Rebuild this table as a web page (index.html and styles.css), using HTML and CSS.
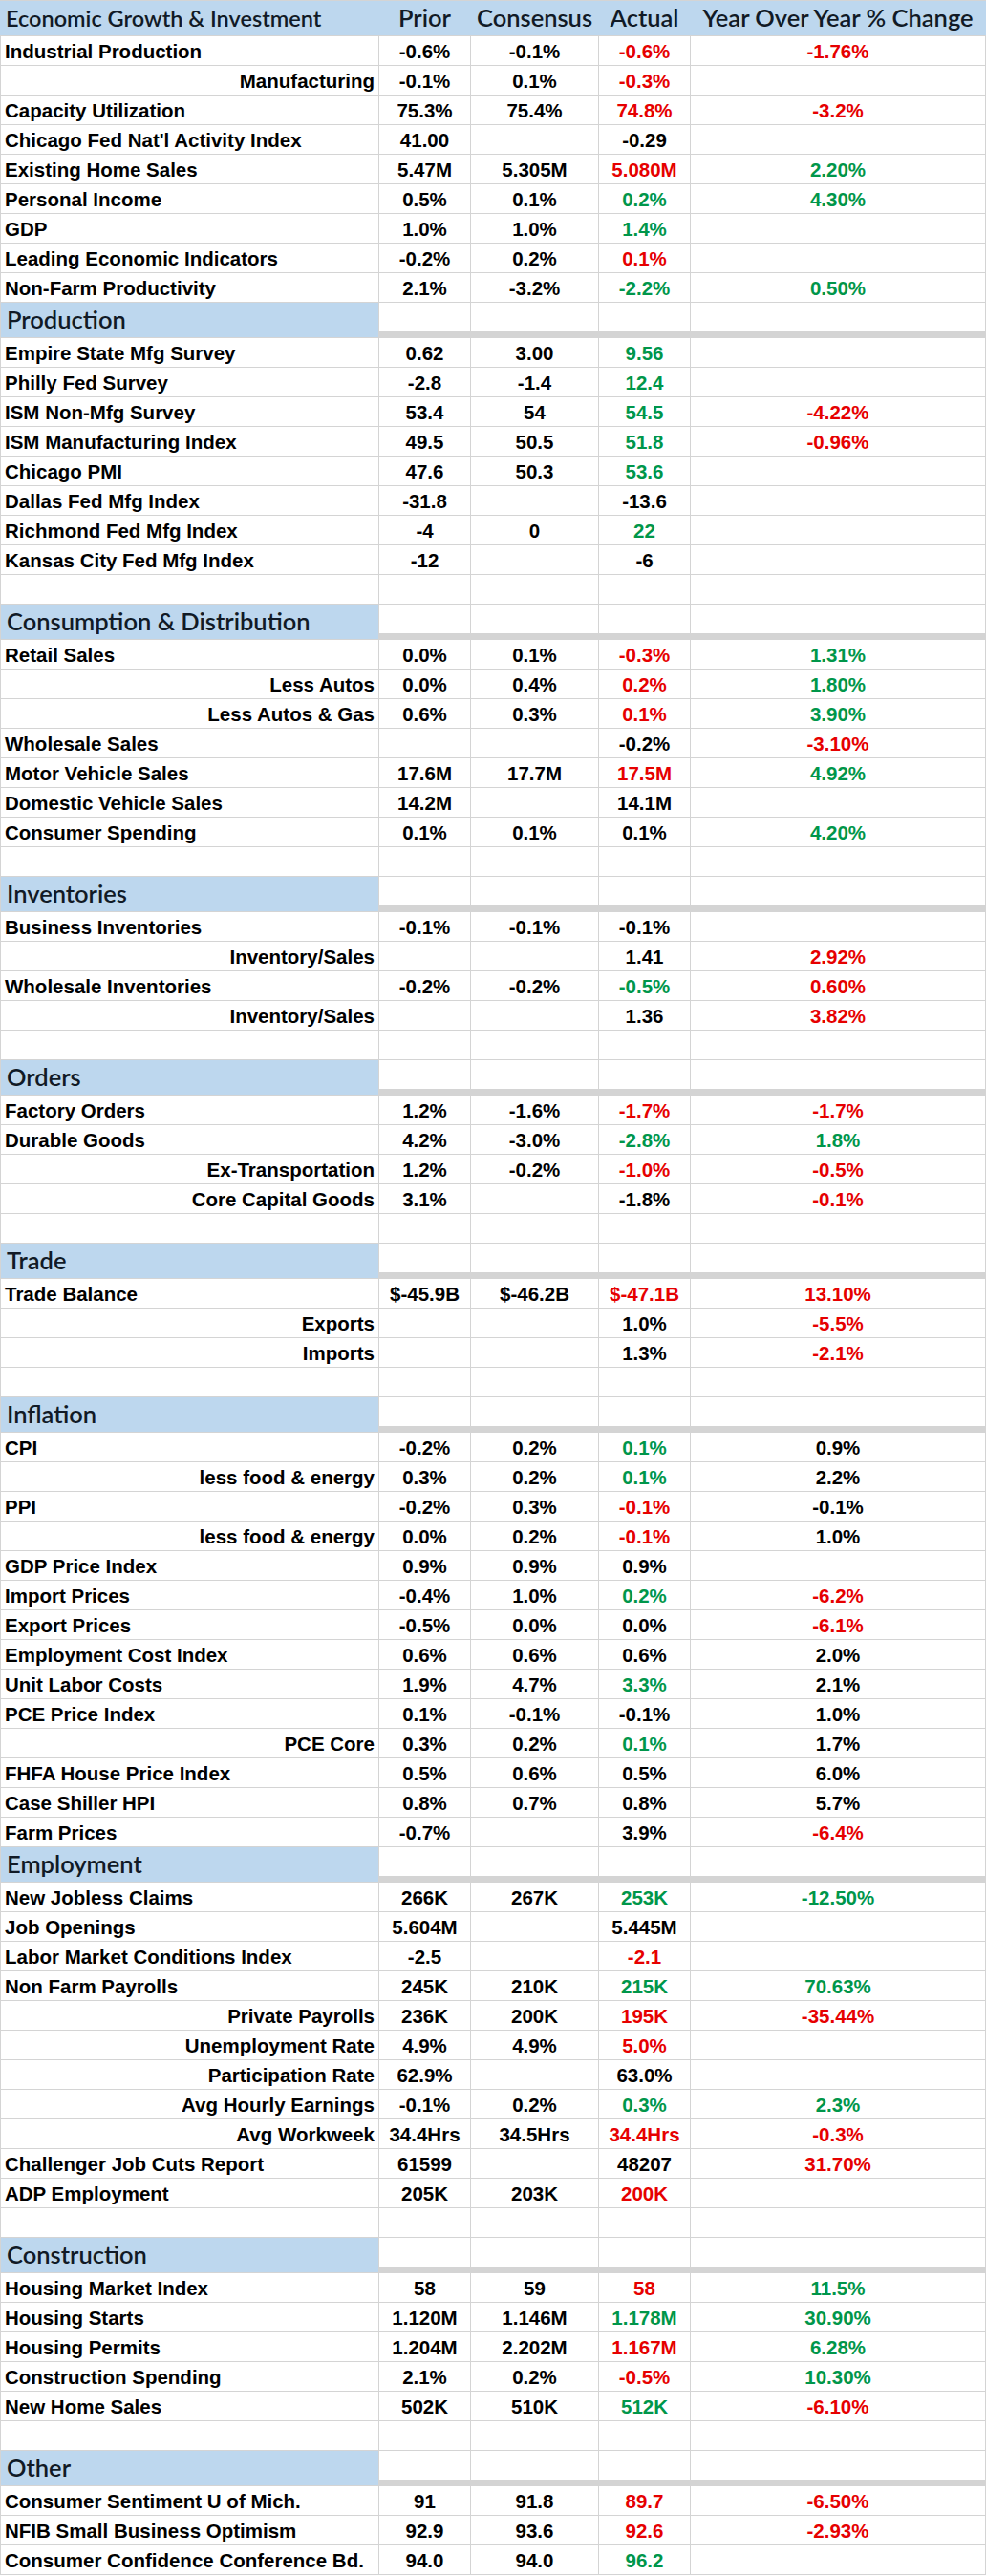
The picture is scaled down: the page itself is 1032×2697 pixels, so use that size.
FILE: index.html
```html
<!DOCTYPE html>
<html>
<head>
<meta charset="utf-8">
<link rel="stylesheet" href="styles.css">
</head>
<body>
<div class="sheet">
  <div class="top">
    <div class="th th-first">Economic Growth &amp; Investment</div>
    <div class="th">Prior</div>
    <div class="th">Consensus</div>
    <div class="th">Actual</div>
    <div class="th">Year Over Year % Change</div>
  </div>

  <div class="c l">Industrial Production</div><div class="c v">-0.6%</div><div class="c v">-0.1%</div><div class="c v red">-0.6%</div><div class="c v red">-1.76%</div>
  <div class="c l r">Manufacturing</div><div class="c v">-0.1%</div><div class="c v">0.1%</div><div class="c v red">-0.3%</div><div class="c v"></div>
  <div class="c l">Capacity Utilization</div><div class="c v">75.3%</div><div class="c v">75.4%</div><div class="c v red">74.8%</div><div class="c v red">-3.2%</div>
  <div class="c l">Chicago Fed Nat'l Activity Index</div><div class="c v">41.00</div><div class="c v"></div><div class="c v">-0.29</div><div class="c v"></div>
  <div class="c l">Existing Home Sales</div><div class="c v">5.47M</div><div class="c v">5.305M</div><div class="c v red">5.080M</div><div class="c v grn">2.20%</div>
  <div class="c l">Personal Income</div><div class="c v">0.5%</div><div class="c v">0.1%</div><div class="c v grn">0.2%</div><div class="c v grn">4.30%</div>
  <div class="c l">GDP</div><div class="c v">1.0%</div><div class="c v">1.0%</div><div class="c v grn">1.4%</div><div class="c v"></div>
  <div class="c l">Leading Economic Indicators</div><div class="c v">-0.2%</div><div class="c v">0.2%</div><div class="c v red">0.1%</div><div class="c v"></div>
  <div class="c l">Non-Farm Productivity</div><div class="c v">2.1%</div><div class="c v">-3.2%</div><div class="c v grn">-2.2%</div><div class="c v grn">0.50%</div>

  <div class="sec">Production</div><div class="c"></div><div class="c"></div><div class="c"></div><div class="c"></div>
  <div class="c l">Empire State Mfg Survey</div><div class="c v">0.62</div><div class="c v">3.00</div><div class="c v grn">9.56</div><div class="c v"></div>
  <div class="c l">Philly Fed Survey</div><div class="c v">-2.8</div><div class="c v">-1.4</div><div class="c v grn">12.4</div><div class="c v"></div>
  <div class="c l">ISM Non-Mfg Survey</div><div class="c v">53.4</div><div class="c v">54</div><div class="c v grn">54.5</div><div class="c v red">-4.22%</div>
  <div class="c l">ISM Manufacturing Index</div><div class="c v">49.5</div><div class="c v">50.5</div><div class="c v grn">51.8</div><div class="c v red">-0.96%</div>
  <div class="c l">Chicago PMI</div><div class="c v">47.6</div><div class="c v">50.3</div><div class="c v grn">53.6</div><div class="c v"></div>
  <div class="c l">Dallas Fed Mfg Index</div><div class="c v">-31.8</div><div class="c v"></div><div class="c v">-13.6</div><div class="c v"></div>
  <div class="c l">Richmond Fed Mfg Index</div><div class="c v">-4</div><div class="c v">0</div><div class="c v grn">22</div><div class="c v"></div>
  <div class="c l">Kansas City Fed Mfg Index</div><div class="c v">-12</div><div class="c v"></div><div class="c v">-6</div><div class="c v"></div>
  <div class="c"></div><div class="c"></div><div class="c"></div><div class="c"></div><div class="c"></div>

  <div class="sec">Consumption &amp; Distribution</div><div class="c"></div><div class="c"></div><div class="c"></div><div class="c"></div>
  <div class="c l">Retail Sales</div><div class="c v">0.0%</div><div class="c v">0.1%</div><div class="c v red">-0.3%</div><div class="c v grn">1.31%</div>
  <div class="c l r">Less Autos</div><div class="c v">0.0%</div><div class="c v">0.4%</div><div class="c v red">0.2%</div><div class="c v grn">1.80%</div>
  <div class="c l r">Less Autos &amp; Gas</div><div class="c v">0.6%</div><div class="c v">0.3%</div><div class="c v red">0.1%</div><div class="c v grn">3.90%</div>
  <div class="c l">Wholesale Sales</div><div class="c v"></div><div class="c v"></div><div class="c v">-0.2%</div><div class="c v red">-3.10%</div>
  <div class="c l">Motor Vehicle Sales</div><div class="c v">17.6M</div><div class="c v">17.7M</div><div class="c v red">17.5M</div><div class="c v grn">4.92%</div>
  <div class="c l">Domestic Vehicle Sales</div><div class="c v">14.2M</div><div class="c v"></div><div class="c v">14.1M</div><div class="c v"></div>
  <div class="c l">Consumer Spending</div><div class="c v">0.1%</div><div class="c v">0.1%</div><div class="c v">0.1%</div><div class="c v grn">4.20%</div>
  <div class="c"></div><div class="c"></div><div class="c"></div><div class="c"></div><div class="c"></div>

  <div class="sec">Inventories</div><div class="c"></div><div class="c"></div><div class="c"></div><div class="c"></div>
  <div class="c l">Business Inventories</div><div class="c v">-0.1%</div><div class="c v">-0.1%</div><div class="c v">-0.1%</div><div class="c v"></div>
  <div class="c l r">Inventory/Sales</div><div class="c v"></div><div class="c v"></div><div class="c v">1.41</div><div class="c v red">2.92%</div>
  <div class="c l">Wholesale Inventories</div><div class="c v">-0.2%</div><div class="c v">-0.2%</div><div class="c v grn">-0.5%</div><div class="c v red">0.60%</div>
  <div class="c l r">Inventory/Sales</div><div class="c v"></div><div class="c v"></div><div class="c v">1.36</div><div class="c v red">3.82%</div>
  <div class="c"></div><div class="c"></div><div class="c"></div><div class="c"></div><div class="c"></div>

  <div class="sec">Orders</div><div class="c"></div><div class="c"></div><div class="c"></div><div class="c"></div>
  <div class="c l">Factory Orders</div><div class="c v">1.2%</div><div class="c v">-1.6%</div><div class="c v red">-1.7%</div><div class="c v red">-1.7%</div>
  <div class="c l">Durable Goods</div><div class="c v">4.2%</div><div class="c v">-3.0%</div><div class="c v grn">-2.8%</div><div class="c v grn">1.8%</div>
  <div class="c l r">Ex-Transportation</div><div class="c v">1.2%</div><div class="c v">-0.2%</div><div class="c v red">-1.0%</div><div class="c v red">-0.5%</div>
  <div class="c l r">Core Capital Goods</div><div class="c v">3.1%</div><div class="c v"></div><div class="c v">-1.8%</div><div class="c v red">-0.1%</div>
  <div class="c"></div><div class="c"></div><div class="c"></div><div class="c"></div><div class="c"></div>

  <div class="sec">Trade</div><div class="c"></div><div class="c"></div><div class="c"></div><div class="c"></div>
  <div class="c l">Trade Balance</div><div class="c v">$-45.9B</div><div class="c v">$-46.2B</div><div class="c v red">$-47.1B</div><div class="c v red">13.10%</div>
  <div class="c l r">Exports</div><div class="c v"></div><div class="c v"></div><div class="c v">1.0%</div><div class="c v red">-5.5%</div>
  <div class="c l r">Imports</div><div class="c v"></div><div class="c v"></div><div class="c v">1.3%</div><div class="c v red">-2.1%</div>
  <div class="c"></div><div class="c"></div><div class="c"></div><div class="c"></div><div class="c"></div>

  <div class="sec">Inflation</div><div class="c"></div><div class="c"></div><div class="c"></div><div class="c"></div>
  <div class="c l">CPI</div><div class="c v">-0.2%</div><div class="c v">0.2%</div><div class="c v grn">0.1%</div><div class="c v">0.9%</div>
  <div class="c l r">less food &amp; energy</div><div class="c v">0.3%</div><div class="c v">0.2%</div><div class="c v grn">0.1%</div><div class="c v">2.2%</div>
  <div class="c l">PPI</div><div class="c v">-0.2%</div><div class="c v">0.3%</div><div class="c v red">-0.1%</div><div class="c v">-0.1%</div>
  <div class="c l r">less food &amp; energy</div><div class="c v">0.0%</div><div class="c v">0.2%</div><div class="c v red">-0.1%</div><div class="c v">1.0%</div>
  <div class="c l">GDP Price Index</div><div class="c v">0.9%</div><div class="c v">0.9%</div><div class="c v">0.9%</div><div class="c v"></div>
  <div class="c l">Import Prices</div><div class="c v">-0.4%</div><div class="c v">1.0%</div><div class="c v grn">0.2%</div><div class="c v red">-6.2%</div>
  <div class="c l">Export Prices</div><div class="c v">-0.5%</div><div class="c v">0.0%</div><div class="c v">0.0%</div><div class="c v red">-6.1%</div>
  <div class="c l">Employment Cost Index</div><div class="c v">0.6%</div><div class="c v">0.6%</div><div class="c v">0.6%</div><div class="c v">2.0%</div>
  <div class="c l">Unit Labor Costs</div><div class="c v">1.9%</div><div class="c v">4.7%</div><div class="c v grn">3.3%</div><div class="c v">2.1%</div>
  <div class="c l">PCE Price Index</div><div class="c v">0.1%</div><div class="c v">-0.1%</div><div class="c v">-0.1%</div><div class="c v">1.0%</div>
  <div class="c l r">PCE Core</div><div class="c v">0.3%</div><div class="c v">0.2%</div><div class="c v grn">0.1%</div><div class="c v">1.7%</div>
  <div class="c l">FHFA House Price Index</div><div class="c v">0.5%</div><div class="c v">0.6%</div><div class="c v">0.5%</div><div class="c v">6.0%</div>
  <div class="c l">Case Shiller HPI</div><div class="c v">0.8%</div><div class="c v">0.7%</div><div class="c v">0.8%</div><div class="c v">5.7%</div>
  <div class="c l">Farm Prices</div><div class="c v">-0.7%</div><div class="c v"></div><div class="c v">3.9%</div><div class="c v red">-6.4%</div>

  <div class="sec">Employment</div><div class="c"></div><div class="c"></div><div class="c"></div><div class="c"></div>
  <div class="c l">New Jobless Claims</div><div class="c v">266K</div><div class="c v">267K</div><div class="c v grn">253K</div><div class="c v grn">-12.50%</div>
  <div class="c l">Job Openings</div><div class="c v">5.604M</div><div class="c v"></div><div class="c v">5.445M</div><div class="c v"></div>
  <div class="c l">Labor Market Conditions Index</div><div class="c v">-2.5</div><div class="c v"></div><div class="c v red">-2.1</div><div class="c v"></div>
  <div class="c l">Non Farm Payrolls</div><div class="c v">245K</div><div class="c v">210K</div><div class="c v grn">215K</div><div class="c v grn">70.63%</div>
  <div class="c l r">Private Payrolls</div><div class="c v">236K</div><div class="c v">200K</div><div class="c v red">195K</div><div class="c v red">-35.44%</div>
  <div class="c l r">Unemployment Rate</div><div class="c v">4.9%</div><div class="c v">4.9%</div><div class="c v red">5.0%</div><div class="c v"></div>
  <div class="c l r">Participation Rate</div><div class="c v">62.9%</div><div class="c v"></div><div class="c v">63.0%</div><div class="c v"></div>
  <div class="c l r">Avg Hourly Earnings</div><div class="c v">-0.1%</div><div class="c v">0.2%</div><div class="c v grn">0.3%</div><div class="c v grn">2.3%</div>
  <div class="c l r">Avg Workweek</div><div class="c v">34.4Hrs</div><div class="c v">34.5Hrs</div><div class="c v red">34.4Hrs</div><div class="c v red">-0.3%</div>
  <div class="c l">Challenger Job Cuts Report</div><div class="c v">61599</div><div class="c v"></div><div class="c v">48207</div><div class="c v red">31.70%</div>
  <div class="c l">ADP Employment</div><div class="c v">205K</div><div class="c v">203K</div><div class="c v red">200K</div><div class="c v"></div>
  <div class="c"></div><div class="c"></div><div class="c"></div><div class="c"></div><div class="c"></div>

  <div class="sec">Construction</div><div class="c"></div><div class="c"></div><div class="c"></div><div class="c"></div>
  <div class="c l">Housing Market Index</div><div class="c v">58</div><div class="c v">59</div><div class="c v red">58</div><div class="c v grn">11.5%</div>
  <div class="c l">Housing Starts</div><div class="c v">1.120M</div><div class="c v">1.146M</div><div class="c v grn">1.178M</div><div class="c v grn">30.90%</div>
  <div class="c l">Housing Permits</div><div class="c v">1.204M</div><div class="c v">2.202M</div><div class="c v red">1.167M</div><div class="c v grn">6.28%</div>
  <div class="c l">Construction Spending</div><div class="c v">2.1%</div><div class="c v">0.2%</div><div class="c v red">-0.5%</div><div class="c v grn">10.30%</div>
  <div class="c l">New Home Sales</div><div class="c v">502K</div><div class="c v">510K</div><div class="c v grn">512K</div><div class="c v red">-6.10%</div>
  <div class="c"></div><div class="c"></div><div class="c"></div><div class="c"></div><div class="c"></div>

  <div class="sec">Other</div><div class="c"></div><div class="c"></div><div class="c"></div><div class="c"></div>
  <div class="c l">Consumer Sentiment U of Mich.</div><div class="c v">91</div><div class="c v">91.8</div><div class="c v red">89.7</div><div class="c v red">-6.50%</div>
  <div class="c l">NFIB Small Business Optimism</div><div class="c v">92.9</div><div class="c v">93.6</div><div class="c v red">92.6</div><div class="c v red">-2.93%</div>
  <div class="c l">Consumer Confidence Conference Bd.</div><div class="c v">94.0</div><div class="c v">94.0</div><div class="c v grn">96.2</div><div class="c v"></div>
</div>
</body>
</html>
```

FILE: styles.css
```css
html, body {
  margin: 0;
  padding: 0;
  background: #ffffff;
}

.sheet {
  width: 1032px;
  box-sizing: border-box;
  display: grid;
  grid-template-columns: 395px 95px 133px 95px 308px;
  gap: 1px;
  padding: 1px;
  background: #d4d4d4;
  font-family: "Liberation Sans", Arial, sans-serif;
  color: #000;
}

.top {
  grid-column: 1 / -1;
  height: 36px;
  background: #bdd7ee;
  display: grid;
  grid-template-columns: 395px 95px 133px 95px 308px;
  column-gap: 1px;
  margin: 0 -1px 0 -1px;
  padding: 0 1px;
}

.th {
  font-family: Lato, "Liberation Sans", sans-serif;
  font-size: 25.5px;
  font-weight: 600;
  color: #111a26;
  text-align: center;
  white-space: nowrap;
  line-height: 1.2;
  padding-top: 2px;
}

.th-first {
  text-align: left;
  padding-left: 5px;
  padding-top: 4px;
  font-size: 23.5px;
}

.sec {
  height: 36px;
  box-sizing: border-box;
  background: #bdd7ee;
  font-family: Lato, "Liberation Sans", sans-serif;
  font-size: 25.5px;
  font-weight: 600;
  color: #111a26;
  line-height: 1.2;
  padding: 2px 0 0 6px;
  white-space: nowrap;
}

.c {
  height: 30px;
  box-sizing: border-box;
  background: #ffffff;
  font-size: 20.5px;
  font-weight: 700;
  line-height: 1.2;
  padding-top: 4px;
  white-space: nowrap;
}

.l {
  padding-left: 4px;
  text-align: left;
}

.l.r {
  text-align: right;
  padding-left: 0;
  padding-right: 4px;
}

.v {
  text-align: center;
}

.red {
  color: #e60000;
}

.grn {
  color: #00964a;
}
```
